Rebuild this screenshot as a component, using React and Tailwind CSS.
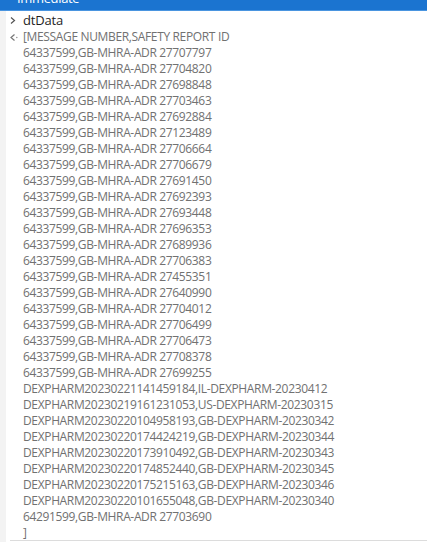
const rows = [
  "64337599,GB-MHRA-ADR 27707797",
  "64337599,GB-MHRA-ADR 27704820",
  "64337599,GB-MHRA-ADR 27698848",
  "64337599,GB-MHRA-ADR 27703463",
  "64337599,GB-MHRA-ADR 27692884",
  "64337599,GB-MHRA-ADR 27123489",
  "64337599,GB-MHRA-ADR 27706664",
  "64337599,GB-MHRA-ADR 27706679",
  "64337599,GB-MHRA-ADR 27691450",
  "64337599,GB-MHRA-ADR 27692393",
  "64337599,GB-MHRA-ADR 27693448",
  "64337599,GB-MHRA-ADR 27696353",
  "64337599,GB-MHRA-ADR 27689936",
  "64337599,GB-MHRA-ADR 27706383",
  "64337599,GB-MHRA-ADR 27455351",
  "64337599,GB-MHRA-ADR 27640990",
  "64337599,GB-MHRA-ADR 27704012",
  "64337599,GB-MHRA-ADR 27706499",
  "64337599,GB-MHRA-ADR 27706473",
  "64337599,GB-MHRA-ADR 27708378",
  "64337599,GB-MHRA-ADR 27699255",
  "DEXPHARM20230221141459184,IL-DEXPHARM-20230412",
  "DEXPHARM20230219161231053,US-DEXPHARM-20230315",
  "DEXPHARM20230220104958193,GB-DEXPHARM-20230342",
  "DEXPHARM20230220174424219,GB-DEXPHARM-20230344",
  "DEXPHARM20230220173910492,GB-DEXPHARM-20230343",
  "DEXPHARM20230220174852440,GB-DEXPHARM-20230345",
  "DEXPHARM20230220175215163,GB-DEXPHARM-20230346",
  "DEXPHARM20230220101655048,GB-DEXPHARM-20230340",
  "64291599,GB-MHRA-ADR 27703690",
  "]",
]

function InputMark() {
  return (
    <svg width="6" height="7" viewBox="0 0 6 7" className="block">
      <path d="M1 0.5 L4.5 3.5 L1 6.5" fill="none" stroke="#555" strokeWidth="1.2" />
    </svg>
  )
}

function OutputMark() {
  return (
    <svg width="8" height="7" viewBox="0 0 8 7" className="block">
      <path d="M4.5 0.5 L1 3.5 L4.5 6.5" fill="none" stroke="#777" strokeWidth="1.2" />
      <circle cx="6.8" cy="3.5" r="0.8" fill="#999" />
    </svg>
  )
}

function Line({ mark, children, dark }) {
  return (
    <div className={"flex items-center " + (dark ? "h-[17px]" : "h-4")}>
      <span className="w-[23px] shrink-0 pl-[10px]">{mark}</span>
      <span className={dark ? "text-[13px] tracking-[-0.2px] text-[#1e1e1e]" : "text-[#717171]"}>{children}</span>
    </div>
  )
}

export default function App() {
  return (
    <div className="w-[427px] h-[542px] overflow-hidden bg-white text-[12px] tracking-[-0.35px] leading-none font-['Open_Sans','Noto_Sans',sans-serif]">
      <div className="h-[11px] bg-[#1b74d0] border-b border-[#4a95e0] overflow-hidden">
        <div className="pl-[17px] -mt-[8px] text-[13px] text-white">Immediate</div>
      </div>
      <div className="relative flex h-[531px]">
        <div className="w-[6px] bg-[#f3f3f3]" />
        <div className="flex-1 -ml-[6px] pt-[1px]">
          <Line mark={<InputMark />} dark>dtData</Line>
          <Line mark={<OutputMark />}>[MESSAGE NUMBER,SAFETY REPORT ID</Line>
          {rows.map((r, i) => (
            <Line key={i}>{r}</Line>
          ))}
        </div>
        <div className="absolute left-[10px] right-0 bottom-[1px] border-t border-[#dcdcdc]" />
      </div>
    </div>
  )
}
